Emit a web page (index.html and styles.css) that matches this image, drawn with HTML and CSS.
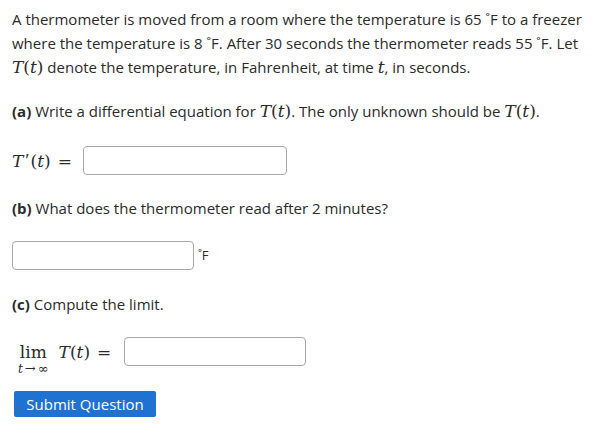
FILE: index.html
```html
<!DOCTYPE html>
<html>
<head>
<meta charset="utf-8">
<link rel="stylesheet" href="styles.css">
</head>
<body>
<div class="question">
  <p class="intro">A thermometer is moved from a room where the temperature is 65 ˚F to a freezer where the temperature is 8 ˚F. After 30 seconds the thermometer reads 55 ˚F. Let <span class="m">T</span><span class="mr">(</span><span class="m">t</span><span class="mr">)</span> denote the temperature, in Fahrenheit, at time <span class="m">t</span>, in seconds.</p>

  <p class="part part-a"><b>(a)</b> Write a differential equation for <span class="m">T</span><span class="mr">(</span><span class="m">t</span><span class="mr">)</span>. The only unknown should be <span class="m">T</span><span class="mr">(</span><span class="m">t</span><span class="mr">)</span>.</p>

  <div class="row row-a">
    <span class="math"><span class="m">T</span><span class="prime">′</span><span class="mr">(</span><span class="m">t</span><span class="mr">)</span><span class="mr eq">=</span></span>
    <span class="input input-wide"></span>
  </div>

  <p class="part part-b"><b>(b)</b> What does the thermometer read after 2 minutes?</p>

  <div class="row row-b">
    <span class="input"></span>
    <span class="unit">˚F</span>
  </div>

  <p class="part part-c"><b>(c)</b> Compute the limit.</p>

  <div class="row row-c">
    <span class="lim"><span class="lim-word">lim</span><span class="lim-sub"><span class="m">t</span><span class="arrow">→</span>∞</span></span>
    <span class="math"><span class="m">T</span><span class="mr">(</span><span class="m">t</span><span class="mr">)</span><span class="mr eq">=</span></span>
    <span class="input"></span>
  </div>

  <button class="submit">Submit Question</button>
</div>
</body>
</html>
```

FILE: styles.css
```css
html, body {
  margin: 0;
  padding: 0;
  background: #ffffff;
}

body {
  font-family: "Open Sans", "Noto Sans", sans-serif;
  font-size: 15px;
  color: #2b2b2b;
}

.question {
  padding: 7px 12px 0 12px;
  display: flex;
  flex-direction: column;
  align-items: flex-start;
}

p {
  margin: 0;
  line-height: 24px;
}

.intro {
  width: 580px;
}

b {
  font-weight: 700;
}

.m {
  font-family: "DejaVu Serif", "Liberation Serif", serif;
  font-style: italic;
  font-size: 17px;
}

.mr {
  font-family: "DejaVu Serif", "Liberation Serif", serif;
  font-size: 17px;
}

.prime {
  font-family: "Liberation Serif", serif;
  font-size: 19px;
  margin: 0 1px 0 2px;
}

.eq {
  margin-left: 7px;
}

.part-a {
  margin-top: 20px;
}

.row {
  display: flex;
  align-items: center;
}

.row-a {
  margin-top: 23px;
  gap: 11px;
}

.math {
  white-space: pre;
  line-height: 24px;
}

.input {
  display: block;
  width: 180px;
  height: 27px;
  border: 1px solid #a9a9a9;
  border-radius: 4px;
  background: #fff;
}

.input-wide {
  width: 202px;
}

.part-b {
  margin-top: 21px;
}

.row-b {
  margin-top: 21px;
  align-items: flex-start;
  gap: 4px;
}

.unit {
  font-size: 13px;
  line-height: 16px;
  margin-top: 6px;
}

.part-c {
  margin-top: 22px;
}

.row-c {
  margin-top: 21px;
  padding-left: 6px;
  align-items: flex-start;
}

.lim {
  display: flex;
  flex-direction: column;
  align-items: center;
  margin-right: 10px;
  font-family: "DejaVu Serif", "Liberation Serif", serif;
}

.lim-word {
  font-size: 17px;
  line-height: 20px;
  margin-top: 5px;
}

.lim-sub {
  font-size: 13px;
  line-height: 13px;
  white-space: pre;
}

.lim-sub .m {
  font-size: 12px;
}

.arrow {
  margin: 0 2px;
}

.row-c .math {
  margin-top: 3px;
  margin-right: 13px;
}

.submit {
  margin-top: 15px;
  margin-left: 2px;
  width: 142px;
  height: 26px;
  padding: 0;
  border: none;
  border-radius: 2px;
  background: #1f72d1;
  color: #ffffff;
  font-family: "Open Sans", "Noto Sans", sans-serif;
  font-size: 15px;
  line-height: 26px;
}
```
